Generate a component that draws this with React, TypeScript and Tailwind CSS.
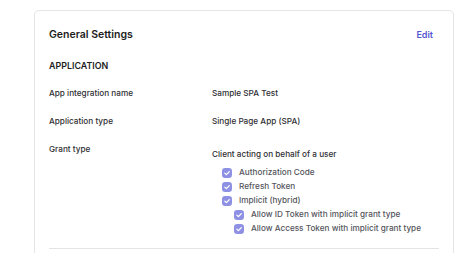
const checks = [
    { label: "Authorization Code", nested: false },
    { label: "Refresh Token", nested: false },
    { label: "Implicit (hybrid)", nested: false },
    { label: "Allow ID Token with implicit grant type", nested: true },
    { label: "Allow Access Token with implicit grant type", nested: true },
];

function CheckIcon() {
    return (
        <svg width="10" height="10" viewBox="0 0 10 10" className="shrink-0">
            <rect x="0" y="0" width="10" height="10" rx="3.2" fill="#8e91e3" />
            <path d="M2.8 5.1 L4.4 6.6 L7.3 3.6" fill="none" stroke="#fff" strokeWidth="1.3" strokeLinecap="round" strokeLinejoin="round" />
        </svg>
    );
}

export default function App() {
    return (
        <div className="w-[474px] h-[253px] overflow-hidden bg-white font-['Inter',sans-serif] pt-[10px] pl-[34px]">
            <div className="w-[420px] h-[260px] border border-[#e4e4e7] rounded-[5px] pl-[14px] pr-[20px] pt-[16px]">
                {/* Header */}
                <div className="flex items-center justify-between h-[16px]">
                    <h2 className="text-[10.5px] font-semibold text-[#1d1d21]">General Settings</h2>
                    <button className="text-[9px] font-semibold text-[#5358d1]">Edit</button>
                </div>

                <div className="mt-[16px] h-[14px] flex items-center text-[8.9px] font-semibold text-[#1d1d21]">APPLICATION</div>

                <div className="mt-[13px] flex h-[14px] items-center text-[8.2px] font-[450] text-[#2f2f33]">
                    <div className="w-[163px]">App integration name</div>
                    <div>Sample SPA Test</div>
                </div>

                <div className="mt-[14px] flex h-[14px] items-center text-[8.2px] font-[450] text-[#2f2f33]">
                    <div className="w-[163px]">Application type</div>
                    <div>Single Page App (SPA)</div>
                </div>

                <div className="mt-[14px] flex text-[8.2px] font-[450] text-[#2f2f33]">
                    <div className="w-[163px] h-[14px] flex items-center">Grant type</div>
                    <div className="pt-[5px]">
                        <div className="h-[14px] flex items-center">Client acting on behalf of a user</div>
                        <div className="mt-[4.5px] pl-[10px]">
                            {checks.map(c => (
                                <div key={c.label} className={`h-[14px] flex items-center gap-[7px] text-[#55555c] ${c.nested ? 'pl-[12px]' : ''}`}>
                                    <CheckIcon />
                                    <span>{c.label}</span>
                                </div>
                            ))}
                        </div>
                    </div>
                </div>

                <div className="mt-[12px] mr-[-6px] border-t border-[#e4e4e7]" />
            </div>
        </div>
    );
}
